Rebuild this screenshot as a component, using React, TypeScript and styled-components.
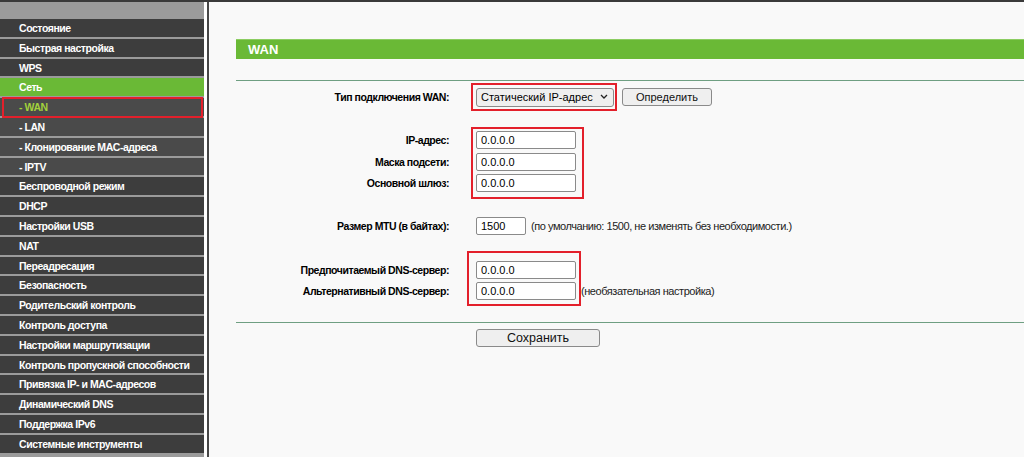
import React from "react";
import styled, { createGlobalStyle, css } from "styled-components";

const GlobalStyle = createGlobalStyle`
  html, body {
    margin: 0;
    padding: 0;
    background: #ffffff;
  }
  body {
    font-family: "Liberation Sans", Arial, sans-serif;
  }
`;

type Kind = "main" | "sub" | "group" | "current";

const menu: { label: string; kind: Kind }[] = [
  { label: "Состояние", kind: "main" },
  { label: "Быстрая настройка", kind: "main" },
  { label: "WPS", kind: "main" },
  { label: "Сеть", kind: "group" },
  { label: "- WAN", kind: "current" },
  { label: "- LAN", kind: "sub" },
  { label: "- Клонирование MAC-адреса", kind: "sub" },
  { label: "- IPTV", kind: "sub" },
  { label: "Беспроводной режим", kind: "main" },
  { label: "DHCP", kind: "main" },
  { label: "Настройки USB", kind: "main" },
  { label: "NAT", kind: "main" },
  { label: "Переадресация", kind: "main" },
  { label: "Безопасность", kind: "main" },
  { label: "Родительский контроль", kind: "main" },
  { label: "Контроль доступа", kind: "main" },
  { label: "Настройки маршрутизации", kind: "main" },
  { label: "Контроль пропускной способности", kind: "main" },
  { label: "Привязка IP- и MAC-адресов", kind: "main" },
  { label: "Динамический DNS", kind: "main" },
  { label: "Поддержка IPv6", kind: "main" },
  { label: "Системные инструменты", kind: "main" },
];

const Page = styled.div`
  display: flex;
  width: 1024px;
  height: 457px;
  overflow: hidden;
  box-sizing: border-box;
  border-top: 2px solid #3a3a3a;
  background: #ffffff;
`;

const Sidebar = styled.nav`
  width: 204px;
  flex: none;
  background: #9b9b9b;
  padding-top: 17px;
`;

const MenuItem = styled.div<{ $kind: Kind }>`
  position: relative;
  height: 17.8px;
  padding-left: 19px;
  border-bottom: 2px solid #9b9b9b;
  font: bold 10.5px/18px "Liberation Sans", Arial, sans-serif;
  letter-spacing: -0.45px;
  white-space: nowrap;
  color: ${(p) => (p.$kind === "current" ? "#a3d13c" : "#ffffff")};
  background: ${(p) =>
    p.$kind === "group"
      ? "#6ab936"
      : p.$kind === "main"
      ? "#3d3d3d"
      : "#4a4a4a"};
  ${(p) =>
    p.$kind === "current" &&
    css`
      &::after {
        content: "";
        position: absolute;
        top: -1px;
        right: 1px;
        bottom: -2px;
        left: 2px;
        border: 2px solid #e3202b;
      }
    `}
`;

const Main = styled.main`
  flex: 1;
  margin-left: 3px;
  border-left: 2px solid #474747;
  background: #f9f9f9;
  padding: 37px 0 0 27px;
`;

const TitleBar = styled.h1`
  margin: 0;
  height: 20px;
  box-sizing: border-box;
  padding-left: 12px;
  border-top: 1px solid #8ccd62;
  background: #6ab936;
  color: #ffffff;
  font: bold 13px/19px "Liberation Sans", Arial, sans-serif;
`;

const Rule = styled.hr<{ $top: number }>`
  margin: ${(p) => p.$top}px 0 0;
  height: 0;
  border: none;
  border-top: 1px solid #6f9f82;
`;

const Row = styled.div<{ $top: number }>`
  display: grid;
  grid-template-columns: 213px auto;
  column-gap: 27px;
  align-items: center;
  justify-content: start;
  margin-top: ${(p) => p.$top}px;
`;

const Stack = styled.div<{ $gap: number }>`
  display: flex;
  flex-direction: column;
  gap: ${(p) => p.$gap}px;
`;

const Label = styled.div`
  height: 18px;
  text-align: right;
  font: bold 10.5px/18px "Liberation Sans", Arial, sans-serif;
  letter-spacing: -0.45px;
  color: #000000;
  white-space: nowrap;
`;

const Fields = styled.div`
  display: flex;
  align-items: center;
`;

const Highlight = styled.div<{ $t: number; $r: number; $b: number; $l: number }>`
  position: relative;
  display: inline-flex;
  flex-direction: column;
  align-self: start;
  &::after {
    content: "";
    position: absolute;
    top: ${(p) => -p.$t}px;
    right: ${(p) => -p.$r}px;
    bottom: ${(p) => -p.$b}px;
    left: ${(p) => -p.$l}px;
    border: 2px solid #e3202b;
    pointer-events: none;
  }
`;

const TextInput = styled.input<{ $w: number }>`
  width: ${(p) => p.$w}px;
  height: 18px;
  box-sizing: border-box;
  margin: 0;
  padding: 0 4px;
  border: 1px solid #8a8a8a;
  border-radius: 2px;
  background: #ffffff;
  color: #000000;
  font: 11px "Liberation Sans", Arial, sans-serif;
  outline: none;
`;

const SelectBox = styled.div`
  position: relative;
  width: 138px;
  height: 19px;
`;

const Select = styled.select`
  appearance: none;
  width: 100%;
  height: 100%;
  box-sizing: border-box;
  margin: 0;
  padding: 0 0 0 4px;
  border: 1px solid #8a8a8a;
  border-radius: 3px;
  background: #efefef;
  color: #000000;
  font: 11px "Liberation Sans", Arial, sans-serif;
`;

const Chevron = styled.svg`
  position: absolute;
  right: 6px;
  top: 7px;
  pointer-events: none;
`;

const Button = styled.button<{ $w: number; $size: number; $gap?: number }>`
  width: ${(p) => p.$w}px;
  height: 18px;
  box-sizing: border-box;
  margin: 0 0 0 ${(p) => p.$gap ?? 0}px;
  padding: 0;
  border: 1px solid #8a8a8a;
  border-radius: 3px;
  background: #efefef;
  color: #111111;
  font: ${(p) => p.$size}px "Liberation Sans", Arial, sans-serif;
`;

const Hint = styled.span<{ $bottom?: boolean }>`
  margin-left: 5px;
  font: 11px/18px "Liberation Sans", Arial, sans-serif;
  letter-spacing: -0.45px;
  color: #222222;
  white-space: nowrap;
  align-self: ${(p) => (p.$bottom ? "flex-end" : "center")};
`;

export default function App() {
  return (
    <>
      <GlobalStyle />
      <Page>
        <Sidebar>
          {menu.map((m) => (
            <MenuItem key={m.label} $kind={m.kind}>
              {m.label}
            </MenuItem>
          ))}
        </Sidebar>

        <Main>
          <TitleBar>WAN</TitleBar>
          <Rule $top={21} />

          <Row $top={6}>
            <Label>Тип подключения WAN:</Label>
            <Fields>
              <Highlight $t={4} $r={3} $b={5} $l={5}>
                <SelectBox>
                  <Select defaultValue="static">
                    <option value="static">Статический IP-адрес</option>
                  </Select>
                  <Chevron width="8" height="5" viewBox="0 0 8 5">
                    <path d="M1 1l3 3 3-3" fill="none" stroke="#222" strokeWidth="1.3" />
                  </Chevron>
                </SelectBox>
              </Highlight>
              <Button $w={90} $size={11} $gap={8}>
                Определить
              </Button>
            </Fields>
          </Row>

          <Row $top={25}>
            <Stack $gap={3.5}>
              <Label>IP-адрес:</Label>
              <Label>Маска подсети:</Label>
              <Label>Основной шлюз:</Label>
            </Stack>
            <Highlight $t={4} $r={8} $b={7} $l={5}>
              <Stack $gap={3.5}>
                <TextInput $w={100} defaultValue="0.0.0.0" />
                <TextInput $w={100} defaultValue="0.0.0.0" />
                <TextInput $w={100} defaultValue="0.0.0.0" />
              </Stack>
            </Highlight>
          </Row>

          <Row $top={25}>
            <Label>Размер MTU (в байтах):</Label>
            <Fields>
              <TextInput $w={50} defaultValue="1500" />
              <Hint>(по умолчанию: 1500, не изменять без необходимости.)</Hint>
            </Fields>
          </Row>

          <Row $top={26}>
            <Stack $gap={2.5}>
              <Label>Предпочитаемый DNS-сервер:</Label>
              <Label>Альтернативный DNS-сервер:</Label>
            </Stack>
            <Fields>
              <Highlight $t={10} $r={5} $b={6} $l={9}>
                <Stack $gap={2.5}>
                  <TextInput $w={100} defaultValue="0.0.0.0" />
                  <TextInput $w={100} defaultValue="0.0.0.0" />
                </Stack>
              </Highlight>
              <Hint $bottom>(необязательная настройка)</Hint>
            </Fields>
          </Row>

          <Rule $top={22.5} />

          <Row $top={6}>
            <span />
            <Button $w={124} $size={12.5}>
              Сохранить
            </Button>
          </Row>
        </Main>
      </Page>
    </>
  );
}
